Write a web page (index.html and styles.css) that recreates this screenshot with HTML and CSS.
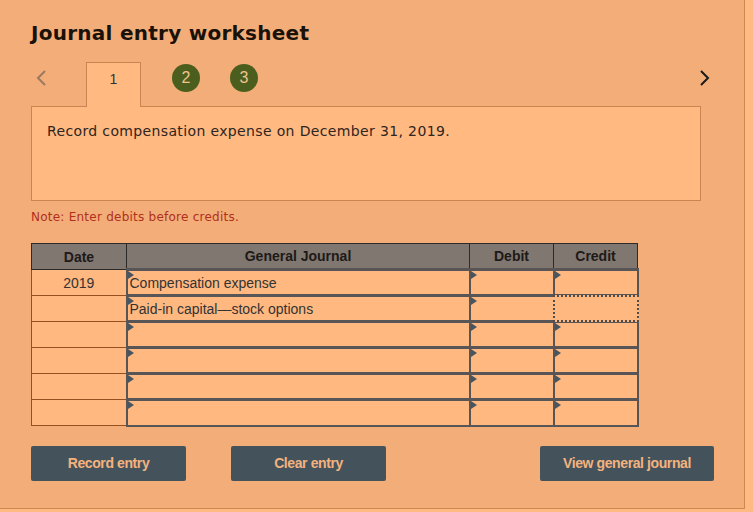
FILE: index.html
```html
<!DOCTYPE html>
<html>
<head>
<meta charset="utf-8">
<link rel="stylesheet" href="styles.css">
</head>
<body>
<div class="panel">
  <h1 class="title">Journal entry worksheet</h1>
  <div class="nav">
    <span class="chev prev"><svg width="12" height="18" viewBox="0 0 12 18"><path d="M10 2 L3 9 L10 16" fill="none" stroke="#9b7a5e" stroke-width="2"/></svg></span>
    <div class="tab">1</div>
    <span class="dot">2</span>
    <span class="dot">3</span>
    <span class="chev next"><svg width="12" height="18" viewBox="0 0 12 18"><path d="M2 2 L9 9 L2 16" fill="none" stroke="#1a1a1a" stroke-width="2"/></svg></span>
  </div>
  <div class="prompt">Record compensation expense on December 31, 2019.</div>
  <p class="note">Note: Enter debits before credits.</p>
  <table class="journal">
    <colgroup><col class="c-date"><col class="c-gj"><col class="c-amt"><col class="c-amt"></colgroup>
    <thead>
      <tr><th>Date</th><th>General Journal</th><th>Debit</th><th>Credit</th></tr>
    </thead>
    <tbody>
      <tr><td class="date">2019</td><td class="inp">Compensation expense</td><td class="inp"></td><td class="inp"></td></tr>
      <tr><td class="date"></td><td class="inp">Paid-in capital—stock options</td><td class="inp"></td><td class="inp focus"></td></tr>
      <tr><td class="date"></td><td class="inp"></td><td class="inp"></td><td class="inp"></td></tr>
      <tr><td class="date"></td><td class="inp"></td><td class="inp"></td><td class="inp"></td></tr>
      <tr><td class="date"></td><td class="inp"></td><td class="inp"></td><td class="inp"></td></tr>
      <tr><td class="date"></td><td class="inp"></td><td class="inp"></td><td class="inp"></td></tr>
    </tbody>
  </table>
  <div class="actions">
    <button class="btn btn-record">Record entry</button>
    <button class="btn btn-clear">Clear entry</button>
    <button class="btn btn-view">View general journal</button>
  </div>
</div>
</body>
</html>
```

FILE: styles.css
```css
html, body {
  margin: 0;
  padding: 0;
  background: #ffb983;
}
.panel {
  box-sizing: border-box;
  width: 745px;
  height: 509px;
  background: #f3ad79;
  border-right: 1px solid #cf8752;
  border-bottom: 1px solid #cf8752;
  padding: 21px 30px 0 31px;
  font-family: "DejaVu Sans", Verdana, sans-serif;
}
.title {
  margin: 0;
  font-size: 20px;
  line-height: 24px;
  font-weight: bold;
  letter-spacing: 0.26px;
  color: #1a1208;
}
.nav {
  display: flex;
  align-items: flex-start;
  height: 44px;
  margin-top: 17px;
  margin-right: 3px;
  position: relative;
  z-index: 2;
}
.chev {
  display: block;
  margin-top: 7px;
}
.prev {
  margin-left: 4px;
  margin-right: 39px;
}
.next {
  margin-left: auto;
}
.tab {
  box-sizing: border-box;
  width: 55px;
  height: 45px;
  background: #ffb981;
  border: 1px solid #c98450;
  border-bottom: none;
  text-align: center;
  font-family: "Liberation Sans", Arial, sans-serif;
  font-size: 14px;
  line-height: 14px;
  padding-top: 9px;
  color: #333;
}
.dot {
  display: block;
  width: 28px;
  height: 28px;
  border-radius: 50%;
  background: #4c5e1e;
  color: #f0c38c;
  text-align: center;
  font-family: "Liberation Sans", Arial, sans-serif;
  font-size: 16px;
  line-height: 28px;
  margin-top: 2px;
  margin-left: 31px;
}
.dot + .dot {
  margin-left: 30px;
}
.prompt {
  box-sizing: border-box;
  width: 670px;
  height: 95px;
  background: #ffb981;
  border: 1px solid #c98450;
  padding: 15px 15px 0 15px;
  font-size: 14px;
  line-height: 18px;
  letter-spacing: 0.36px;
  color: #2e2520;
  position: relative;
  z-index: 1;
}
.note {
  margin: 8px 0 0 0;
  font-size: 12px;
  line-height: 16px;
  letter-spacing: 0.24px;
  color: #b0301c;
}
.journal {
  margin-top: 18px;
  width: 606px;
  table-layout: fixed;
  border-collapse: collapse;
  font-family: "Liberation Sans", Arial, sans-serif;
  font-size: 14px;
}
.c-date { width: 95px; }
.c-gj { width: 343px; }
.c-amt { width: 84px; }
.journal thead tr { height: 26px; }
.journal tbody tr { height: 26px; }
.journal th {
  background: #7f7770;
  border: 1px solid #2e2a28;
  color: #1e1a18;
  font-weight: bold;
  padding: 0;
  text-align: center;
}
.journal td {
  padding: 0;
  background: #ffb880;
  color: #333;
}
.journal td.date {
  border: 1px solid #94501f;
  text-align: center;
}
.journal td.inp {
  border: 2px solid #575555;
  border-top-width: 3px;
  position: relative;
  padding-left: 2px;
  text-align: left;
}
.journal td.inp::before {
  content: "";
  position: absolute;
  left: 0;
  top: 0;
  width: 0;
  height: 0;
  border-left: 6px solid #475560;
  border-top: 4px solid transparent;
  border-bottom: 4px solid transparent;
}
.journal td.focus::before {
  display: none;
}
.journal td.focus::after {
  content: "";
  position: absolute;
  left: -2px;
  top: -2px;
  right: -2px;
  bottom: -2px;
  background: #ffb880;
  border: 2px dotted #4f4d4c;
}
.actions {
  display: flex;
  margin-top: 19px;
}
.btn {
  height: 35px;
  border: none;
  border-radius: 2px;
  background: #44525c;
  color: #f3b27e;
  font-family: "Liberation Sans", Arial, sans-serif;
  font-weight: bold;
  font-size: 14px;
  letter-spacing: -0.4px;
  padding: 0;
  cursor: pointer;
}
.btn-record { width: 155px; }
.btn-clear { width: 155px; margin-left: 45px; }
.btn-view { width: 174px; margin-left: auto; }
```
